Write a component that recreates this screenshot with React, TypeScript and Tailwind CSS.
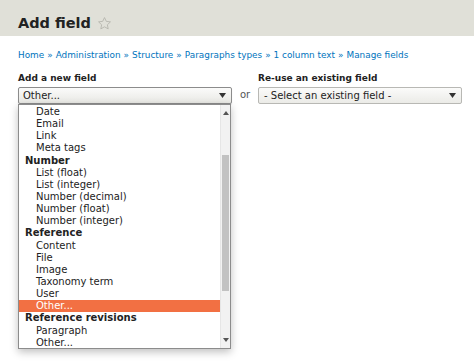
import React from 'react';

type Item = { label: string; group?: boolean; active?: boolean };

const items: Item[] = [
  { label: 'Date' },
  { label: 'Email' },
  { label: 'Link' },
  { label: 'Meta tags' },
  { label: 'Number', group: true },
  { label: 'List (float)' },
  { label: 'List (integer)' },
  { label: 'Number (decimal)' },
  { label: 'Number (float)' },
  { label: 'Number (integer)' },
  { label: 'Reference', group: true },
  { label: 'Content' },
  { label: 'File' },
  { label: 'Image' },
  { label: 'Taxonomy term' },
  { label: 'User' },
  { label: 'Other...', active: true },
  { label: 'Reference revisions', group: true },
  { label: 'Paragraph' },
  { label: 'Other...' },
];

const crumbs = ['Home', 'Administration', 'Structure', 'Paragraphs types', '1 column text', 'Manage fields'];

const Arrow = () => (
  <svg width="7" height="5" viewBox="0 0 7 5" className="shrink-0">
    <path d="M0 0h7L3.5 5z" fill="#333" />
  </svg>
);

export default function App() {
  return (
    <div className="relative h-[363px] w-[474px] overflow-hidden bg-white font-['DejaVu_Sans',sans-serif] text-[#222]">
      <div className="flex h-[36px] items-center bg-[#e0e0d8] px-[18px] pt-[10px]">
        <h1 className="text-[14.5px] font-bold leading-none text-[#222]">Add field</h1>
        <svg width="15" height="15" viewBox="0 0 24 24" className="ml-[6px]">
          <path
            d="M12 2.5l2.9 6.1 6.6.8-4.9 4.6 1.3 6.6L12 17.3l-5.9 3.3 1.3-6.6-4.9-4.6 6.6-.8z"
            fill="none"
            stroke="#b5b5ad"
            strokeWidth="1.4"
            strokeLinejoin="round"
          />
        </svg>
      </div>

      <div className="whitespace-nowrap px-[18px] pt-[12px] text-[8.9px] leading-[14px] text-[#0074bd]">
        {crumbs.map((c, i) => (
          <span key={c}>
            {i > 0 && <span className="mx-[3px] text-[#0074bd]">»</span>}
            {c}
          </span>
        ))}
      </div>

      <div className="flex items-end pl-[18px] pt-[10px]">
        <div className="w-[214px] shrink-0">
          <div className="mb-[2px] text-[9px] font-bold leading-[13px]">Add a new field</div>
          <div className="flex h-[17px] items-center justify-between rounded-[2px] border border-[#8c8c8c] bg-gradient-to-b from-[#fbfbfa] to-[#e8e8e4] pl-[4px] pr-[5px] text-[10px] leading-none shadow-[0_1px_1px_rgba(0,0,0,0.15)]">
            <span>Other...</span>
            <Arrow />
          </div>
        </div>
        <div className="w-[26px] shrink-0 pb-[3px] text-center text-[10px] leading-[13px] text-[#555]">or</div>
        <div className="w-[204px] shrink-0">
          <div className="mb-[2px] text-[9px] font-bold leading-[13px]">Re-use an existing field</div>
          <div className="flex h-[17px] items-center justify-between rounded-[2px] border border-[#b8b8b4] bg-gradient-to-b from-[#fbfbfa] to-[#ebebe7] pl-[5px] pr-[5px] text-[10px] leading-none">
            <span>- Select an existing field -</span>
            <Arrow />
          </div>
        </div>
      </div>

      <div className="absolute left-[18px] top-[104px] flex h-[245px] w-[213px] border border-[#8c8c8c] bg-white shadow-[0_3px_8px_rgba(0,0,0,0.25)]">
        <div className="flex-1 overflow-hidden pt-[1px]">
          {items.map((it, i) => (
            <div
              key={i}
              className={`h-[12.15px] whitespace-nowrap text-[10px] leading-[12.15px] ${
                it.group ? 'pl-[6px] font-bold text-[#222]' : 'pl-[17px]'
              } ${it.active ? 'bg-[#f27043] text-white' : ''}`}
            >
              {it.label}
            </div>
          ))}
        </div>
        <div className="relative w-[10px] border-l border-[#e6e6e6] bg-[#f2f2f2]">
          <svg width="6" height="4" viewBox="0 0 6 4" className="absolute left-[2px] top-[6px]">
            <path d="M0 4h6L3 0z" fill="#555" />
          </svg>
          <div className="absolute left-[1px] right-[1px] top-[50px] h-[136px] bg-[#c2c2c2]" />
          <svg width="6" height="4" viewBox="0 0 6 4" className="absolute bottom-[6px] left-[2px]">
            <path d="M0 0h6L3 4z" fill="#555" />
          </svg>
        </div>
      </div>
    </div>
  );
}
